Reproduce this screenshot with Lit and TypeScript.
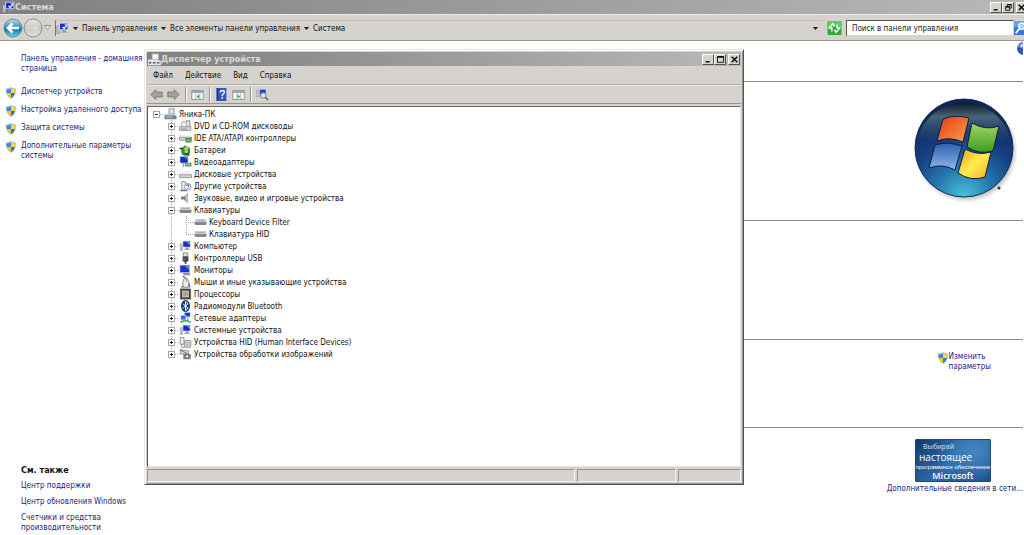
import { LitElement, html, svg, css, nothing } from "lit";
import { customElement, property } from "lit/decorators.js";

const monitor = svg`<rect x="4" y="1" width="11" height="9" fill="#d8dcec"/><rect x="5" y="2" width="9" height="7" fill="#1230c8"/><path d="M9 2h5v5z" fill="#6f8cf4"/><path d="M8 10h4v2h2v1H6v-1h2z" fill="#8c92a4"/>`;
const drive = svg`<path d="M2 5h11l3 4v4H0V9z" fill="#c9c9c9"/><path d="M2 5h11l3 4H0z" fill="#f1f1f1"/><path d="M0 9h16v4H0z" fill="#d2d2d2" stroke="#777" stroke-width=".8"/>`;
const pc = svg`<path d="M1 5h3v9H1z" fill="#c5c8d2" stroke="#848894" stroke-width=".7"/>${monitor}`;
const panel = svg`<rect x="1" y="3" width="14" height="11" fill="#fafafa" stroke="#7d8792"/><path d="M1 3h14v3H1z" fill="#8fa4b8"/><path d="M6 6v8M11 6v8" stroke="#9aa4ac"/>`;

const ICONS: Record<string, unknown> = {
  monitor,
  pc,
  drive,
  system: svg`${pc}<path d="M8 6l2 2 4-5" stroke="#fff" stroke-width="1.5" fill="none"/>`,
  root: svg`<path d="M6 1h7v7H6z" fill="#dfe5ea" stroke="#7b8792"/><path d="M1 8h12l3 3v4H0v-5z" fill="#71838f"/><path d="M1 8h12l2 2H1z" fill="#b9c8d0"/><path d="M2 12h8" stroke="#d9e4ea"/>`,
  devmgr: svg`<path d="M5 1h8v7H5z" fill="#f4f6f8" stroke="#a3adb5"/><path d="M0 8h12l4 2v5H0z" fill="#dfe6ea"/><path d="M1 12h3M6 12h3M11 12h3" stroke="#4d5962" stroke-width="2"/>`,
  dvd: svg`<path d="M9 1h5v10H9z" fill="#e4e4e4" stroke="#777"/><circle cx="6" cy="6" r="4" fill="#eee" stroke="#999"/><path d="M0 9h15v5H0z" fill="#d6d6d6" stroke="#888"/><path d="M2 12h8" stroke="#777"/>`,
  ide: svg`<path d="M2 4h11l3 3v4H0V7z" fill="#b0b0b0"/><path d="M2 4h11l3 3H0z" fill="#f1f1f1"/><path d="M0 7h16v4H0z" fill="#d2d2d2" stroke="#777" stroke-width=".8"/><path d="M8 8h8v6H8z" fill="#3d9852"/><path d="M9 11h6" stroke="#bfe6b8"/>`,
  battery: svg`<path d="M2 7l5-5 7 3v8l-6 3-5-2z" fill="#3c8b35"/><path d="M5 7l4-4 4 2-3 4z" fill="#9dd884"/><path d="M0 6h5M8 13l5 2" stroke="#333" stroke-width="2"/><circle cx="9" cy="10" r="2" fill="#c8e850"/>`,
  video: svg`<rect x="0" y="0" width="12" height="10" fill="#dde"/><rect x="1" y="1" width="10" height="8" fill="#1230c8"/><path d="M6 1h5v5z" fill="#5d7df0"/><path d="M7 9h9v5H7z" fill="#539b72"/><path d="M5 9v6" stroke="#667"/><path d="M9 11h5" stroke="#d9efdf"/>`,
  other: svg`<path d="M3 2h5v12H3z" fill="#e7e7e7" stroke="#888"/><path d="M1 14h9" stroke="#777" stroke-width="2"/><circle cx="11" cy="9" r="4.5" fill="#eef2fb" stroke="#7684a5"/><path d="M9.500 8q0-2 1.500-2t1.500 1.500q0 1-1.500 2M11 11v1" stroke="#2746a0" stroke-width="1.200" fill="none"/>`,
  sound: svg`<path d="M2 6h4l5-5v14l-5-5H2z" fill="#7b828a"/><path d="M7 5l4-4v14l-2-2z" fill="#bcc1c7"/>`,
  keyboard: svg`<path d="M3 4h10q2 0 3 4v2q0 2-2 2H2q-2 0-2-2V8q1-4 3-4z" fill="#85878c"/><path d="M3 4h10q2 0 3 4H0q1-4 3-4z" fill="#cfd0d4"/><path d="M3 6h10" stroke="#9b9da3"/>`,
  usb: svg`<path d="M5 1h6v5H5z" fill="#ddd" stroke="#777"/><path d="M4 6h8v5q0 2-4 3-4-1-4-3z" fill="#4a4a4c"/><path d="M8 13v3" stroke="#444" stroke-width="2"/><path d="M6 8v3" stroke="#999"/>`,
  display: svg`<rect x="0" y="1" width="14" height="11" fill="#ccd3ee"/><rect x="1" y="2" width="12" height="9" fill="#1636cc"/><path d="M7 2h6v6z" fill="#6f8cf4"/><path d="M5 12h9v3H5z" fill="#8c92a4"/>`,
  mouse: svg`<path d="M5 15q-2-9 2-12 6-1 6 12z" fill="#ececec" stroke="#666"/><path d="M8 3q-1-3-4-2M5 14L2 15M12 10l2 5" stroke="#444" stroke-width="1.300" fill="none"/><path d="M9 3v5" stroke="#777"/>`,
  cpu: svg`<rect x="1" y="1" width="14" height="14" fill="#3e3c38"/><rect x="4" y="4" width="8" height="8" fill="#a6a49c" stroke="#d6d4cc"/><path d="M1 1h14v14H1z" fill="none" stroke="#77736a" stroke-dasharray="1 1"/>`,
  bluetooth: svg`<ellipse cx="8" cy="8" rx="6" ry="8" fill="#0a3c74"/><path d="M4.500 5l7 6L8 14V2l3.500 3-7 6" stroke="#fff" stroke-width="1.300" fill="none"/>`,
  network: svg`<rect x="6" y="0" width="9" height="7" fill="#cdd6f4"/><rect x="7" y="1" width="7" height="5" fill="#1d3fd0"/><rect x="1" y="4" width="8" height="7" fill="#cdd6f4"/><rect x="2" y="5" width="6" height="5" fill="#3f67e4"/><path d="M1 14q7-5 14 0" stroke="#4db653" stroke-width="2.500" fill="none"/><path d="M11 7v5" stroke="#57a"/>`,
  hid: svg`<path d="M1 2h5v9H1z" fill="#eee" stroke="#777"/><path d="M3 11v4h4" stroke="#777" fill="none"/><rect x="7" y="6" width="8" height="9" rx="1" fill="#dde1e4" stroke="#6a7277"/><path d="M9 9h4M9 12h4" stroke="#777"/>`,
  imaging: svg`<path d="M1 2l11 2v4H1z" fill="#ddd" stroke="#777"/><rect x="5" y="8" width="10" height="7" fill="#7f8589"/><circle cx="10" cy="11" r="2.500" fill="#dfe6ea" stroke="#444"/><path d="M1 3l9 4" stroke="#555"/>`,
  shield: svg`<path d="M8 0q3 2 7 2 0 10-7 14Q1 12 1 2q4 0 7-2z" fill="#aebccb"/><path d="M8 2v6H2.500Q2 6 2 3.500 5 3.500 8 2z" fill="#3f87d2"/><path d="M8 2q3 1.500 6 1.500Q14 6 13.500 8H8z" fill="#f6d743"/><path d="M2.500 8H8v6.500Q3.500 12 2.500 8z" fill="#f0c630"/><path d="M8 8h5.500Q12.500 12 8 14.500z" fill="#2f78c6"/>`,
  arrowL: svg`<path d="M1 8l6-6v3h8v6H7v3z" fill="#a3a19c" stroke="#75736e"/>`,
  arrowR: svg`<path d="M15 8L9 2v3H1v6h8v3z" fill="#a3a19c" stroke="#75736e"/>`,
  treeView: svg`${panel}<path d="M10 8v5L7 10.500z" fill="#2c9a3a"/>`,
  actions: svg`${panel}<path d="M7 8v5l3-2.500z" fill="#2c9a3a"/>`,
  help: svg`<rect x="2" y="0" width="12" height="16" fill="#3058c0"/><path d="M2 0h2v16H2z" fill="#1a3792"/><path d="M6.500 5.500Q6.500 3 9 3t2.500 2q0 2-2.500 3.500V10M9 11.500v2" stroke="#fff" stroke-width="1.700" fill="none"/>`,
  scan: svg`<rect x="4" y="1" width="9" height="8" fill="#d0d8f4"/><rect x="5" y="2" width="7" height="6" fill="#2140c8"/><path d="M1 3h3v8H1z" fill="#c8ccd6" stroke="#8b8f98" stroke-width=".7"/><circle cx="9" cy="9" r="3.500" fill="#d9ebf7" fill-opacity=".85" stroke="#667"/><path d="M11.500 11.500L15 15" stroke="#6b6b70" stroke-width="2"/>`,
  refresh: svg`<rect width="16" height="16" rx="1" fill="#35a83b"/><path d="M0 0h16v7H0z" fill="#64c863"/><path d="M5 12V8H2l4-5 2 3M11 4v4h3l-4 5-2-3" fill="none" stroke="#fff" stroke-width="1.600"/>`,
  search: svg`<rect width="16" height="16" fill="#3b74d8"/><path d="M0 0h16v7H0z" fill="#6ba0ec"/><circle cx="9" cy="6" r="3.500" fill="#a8d0fa" stroke="#fff" stroke-width="1.500"/><path d="M6 9l-4 5" stroke="#fff" stroke-width="2.200"/>`,
  info: svg`<circle cx="8" cy="8" r="8" fill="#2b55b4"/><path d="M1 6a7 7 0 0 1 14 0q-7 3-14 0z" fill="#6c94de"/><path d="M5.500 6Q5.500 3.500 8 3.500T10.500 6q0 1-2.500 2.500V10M8 11.500v2" stroke="#fff" stroke-width="1.700" fill="none"/>`,
  min: svg`<path d="M3 12h7" stroke="#000" stroke-width="2.500"/>`,
  max: svg`<path d="M2.500 3h11v10h-11z" fill="none" stroke="#000" stroke-width="1.500"/><path d="M2 3.500h12" stroke="#000" stroke-width="2.500"/>`,
  restore: svg`<path d="M6 6V3h7v6h-3M3 6.500h7V13H3z" fill="none" stroke="#000" stroke-width="1.500"/><path d="M3 7h7M6 3h7" stroke="#000" stroke-width="2"/>`,
  close: svg`<path d="M3 3l10 10M13 3L3 13" stroke="#000" stroke-width="2.400"/>`,
};

const icon = (name: string, cls = "icon") =>
  html`<svg class=${cls} viewBox="0 0 16 16" aria-hidden="true">${ICONS[name]}</svg>`;

const shared = css`
  * { box-sizing: border-box; }
  button, input { font: inherit; color: inherit; margin: 0; padding: 0; border: 0; background: none; }
  button { display: flex; align-items: center; justify-content: center; flex: none; }
  ul { list-style: none; margin: 0; padding: 0; }
  h1, h2 { margin: 0; font-size: 9px; line-height: 10px; }
  .icon { width: 13px; height: 13px; flex: none; display: block; }
  .title {
    display: flex; align-items: center; height: 14px; padding-left: 2px;
    background: linear-gradient(90deg, #808080, #b8b8b8);
    color: #dcd9d4; font-weight: bold;
  }
  .title h1, .title h2 { flex: 1; }
  .caption {
    width: 12px; height: 11px; background: #d6d3ce;
    border: 1px solid; border-color: #fff #55534f #55534f #fff;
  }
  .caption .icon { width: 9px; height: 9px; }
  .gap { margin-left: 2px; }
`;

interface Node { label: string; icon: string; children?: Node[]; open?: boolean; leaf?: boolean; }

const DEVICES: Node[] = [
  { label: "DVD и CD-ROM дисководы", icon: "dvd" },
  { label: "IDE ATA/ATAPI контроллеры", icon: "ide" },
  { label: "Батареи", icon: "battery" },
  { label: "Видеоадаптеры", icon: "video" },
  { label: "Дисковые устройства", icon: "drive" },
  { label: "Другие устройства", icon: "other" },
  { label: "Звуковые, видео и игровые устройства", icon: "sound" },
  {
    label: "Клавиатуры", icon: "keyboard", open: true,
    children: [
      { label: "Keyboard Device Filter", icon: "keyboard", leaf: true },
      { label: "Клавиатура HID", icon: "keyboard", leaf: true },
    ],
  },
  { label: "Компьютер", icon: "pc" },
  { label: "Контроллеры USB", icon: "usb" },
  { label: "Мониторы", icon: "display" },
  { label: "Мыши и иные указывающие устройства", icon: "mouse" },
  { label: "Процессоры", icon: "cpu" },
  { label: "Радиомодули Bluetooth", icon: "bluetooth" },
  { label: "Сетевые адаптеры", icon: "network" },
  { label: "Системные устройства", icon: "pc" },
  { label: "Устройства HID (Human Interface Devices)", icon: "hid" },
  { label: "Устройства обработки изображений", icon: "imaging" },
];

@customElement("device-tree")
class DeviceTree extends LitElement {
  @property({ attribute: false }) nodes: Node[] = [];

  static styles = [shared, css`
    :host { display: block; }
    .row { display: flex; align-items: center; height: 12px; white-space: nowrap; }
    .twig {
      display: flex; align-items: center; justify-content: center; width: 16px; height: 12px; flex: none;
      background: repeating-linear-gradient(90deg, #aaa 0 1px, transparent 1px 2px) 8px 6px / 8px 1px no-repeat;
    }
    .icon { margin-right: 2px; width: 13px; height: 12px; }
    .label { padding-top: 1px; }
    .branch {
      padding-left: 15px;
      background: repeating-linear-gradient(#aaa 0 1px, transparent 1px 2px) 23px 0 / 1px calc(100% - 6px) no-repeat;
    }
    .box { position: relative; width: 7px; height: 7px; border: 1px solid #a8a8a8; background: #fff; }
    .box::before { content: ""; position: absolute; inset: 2px 1px; background: #222; }
    .closed::after { content: ""; position: absolute; inset: 1px 2px; background: #222; }
  `];

  private node(n: Node): unknown {
    return html`<li role="treeitem" aria-expanded=${n.leaf ? nothing : n.open ? "true" : "false"}>
      <div class="row">
        <span class="twig">${n.leaf ? nothing : html`<button class="box ${n.open ? "" : "closed"}" aria-label=${n.label}></button>`}</span>
        ${icon(n.icon)}<span class="label">${n.label}</span>
      </div>
      ${n.children ? html`<ul class="branch" role="group">${n.children.map((c) => this.node(c))}</ul>` : nothing}
    </li>`;
  }

  render() {
    return html`<ul role="tree">${this.nodes.map((n) => this.node(n))}</ul>`;
  }
}

@customElement("device-manager")
class DeviceManager extends LitElement {
  static styles = [shared, css`
    :host {
      display: flex; flex-direction: column; padding: 2px;
      background: #d6d3ce; border: 1px solid; border-color: #e8e5e0 #55534f #55534f #e8e5e0;
      box-shadow: inset 1px 1px #fff, inset -1px -1px #96948f;
    }
    .title { padding: 0 1px; }
    .menu { display: flex; align-items: center; gap: 12px; height: 19px; padding: 2px 0 0 6px; border-bottom: 1px solid #b0ada8; }
    .tools { display: flex; align-items: center; gap: 4px; height: 19px; padding-left: 3px; border-top: 1px solid #eeebe6; border-bottom: 1px solid #96948f; }
    .sep { width: 2px; height: 15px; margin-left: 1px; border-left: 1px solid #96948f; border-right: 1px solid #fff; }
    .view {
      flex: 1; margin-top: 2px; padding-top: 1px; background: #fff;
      border: 1px solid; border-color: #6b6964 #e8e5e0 #e8e5e0 #55534f;
    }
    .status { display: grid; grid-template-columns: 428fr 99fr 63fr; gap: 2px; padding-top: 2px; }
    .cell { height: 13px; border: 1px solid; border-color: #96948f #f4f2ee #f4f2ee #96948f; }
  `];

  render() {
    const sep = html`<span class="sep"></span>`;
    const tool = (n: string, label: string) => html`<button aria-label=${label}>${icon(n)}</button>`;
    return html`
      <header class="title">
        ${icon("devmgr")}<h2>Диспетчер устройств</h2>
        <button class="caption" aria-label="Свернуть">${icon("min")}</button>
        <button class="caption" aria-label="Развернуть">${icon("max")}</button>
        <button class="caption gap" aria-label="Закрыть">${icon("close")}</button>
      </header>
      <nav class="menu">
        ${["Файл", "Действие", "Вид", "Справка"].map((m) => html`<button>${m}</button>`)}
      </nav>
      <div class="tools">
        ${tool("arrowL", "Назад")}${tool("arrowR", "Вперед")}${sep}${tool("treeView", "Дерево консоли")}${sep}
        ${tool("help", "Справка")}${tool("actions", "Панель действий")}${sep}${tool("scan", "Обновить конфигурацию")}
      </div>
      <div class="view">
        <device-tree .nodes=${[{ label: "Яника-ПК", icon: "root", open: true, children: DEVICES }]}></device-tree>
      </div>
      <footer class="status"><span class="cell"></span><span class="cell"></span><span class="cell"></span></footer>
    `;
  }
}

@customElement("app-root")
class AppRoot extends LitElement {
  static styles = [shared, css`
    :host {
      display: flex; flex-direction: column; position: relative; min-height: 100vh; overflow: hidden;
      background: #fff; color: #111; font: 8px/10px "DejaVu Sans Condensed", "DejaVu Sans", sans-serif;
    }
    a { color: #1c1c80; text-decoration: none; }
    .bar { display: flex; align-items: center; height: 27px; padding-left: 3px; background: #d6d3ce; border-top: 1px solid #efece7; border-bottom: 1px solid #96948f; }
    .round { width: 20px; height: 20px; }
    .drop { width: 8px; margin-right: 4px; }
    .address {
      display: flex; align-items: center; gap: 4px; flex: 1; height: 16px; padding-right: 5px;
      border-left: 1px solid #77756f; border-top: 1px solid #c2bfba;
    }
    .address a { color: #111; padding-top: 1px; }
    .tri { width: 5px; height: 3px; flex: none; }
    .spacer { flex: 1; }
    .go { margin: 0 4px; }
    .go .icon { width: 15px; height: 14px; }
    .search { width: 168px; height: 16px; padding: 1px 5px 0; background: #fff; border: 1px solid; border-color: #55534f #d6d3ce #d6d3ce #55534f; }
    .search::placeholder { color: #222; opacity: 1; }
    .find { width: 10px; overflow: hidden; justify-content: flex-start; }
    .find .icon { width: 14px; height: 14px; }
    .edge { width: 8px; overflow: hidden; justify-content: flex-start; border-right: 0; }
    .body { display: flex; flex: 1; }
    .side { display: flex; flex-direction: column; width: 144px; padding: 13px 0 2px 5px; }
    .home { margin-bottom: 13px; padding-left: 16px; white-space: nowrap; }
    .tasks { display: grid; gap: 6px; }
    .task { display: flex; gap: 4px; white-space: nowrap; }
    .task .icon { width: 12px; height: 12px; }
    .also { display: flex; flex-direction: column; gap: 6px; margin-top: auto; padding-left: 16px; }
    .main { flex: 1; padding-right: 1px; }
    .section { display: flex; justify-content: flex-end; border-bottom: 1px solid #8c8c8c; }
    .head { height: 41px; }
    .brand { height: 139px; padding: 13px 5px 0 0; }
    .facts { height: 119px; }
    .name { height: 88px; padding: 12px 32px 0 0; }
    .change { display: flex; align-items: flex-start; }
    .change .icon { width: 12px; height: 12px; }
    .corner { width: 6px; height: 15px; overflow: hidden; justify-content: flex-start; }
    .logo { width: 106px; height: 108px; }
    .genuine { display: flex; flex-direction: column; align-items: flex-end; padding-top: 11px; }
    .badge {
      display: flex; flex-direction: column; align-items: center; width: 76px; height: 43px; margin: 0 32px 2px 0; padding: 2px 0;
      border: 1px solid #24456e; border-radius: 1px; color: #fff; white-space: nowrap;
      background: radial-gradient(circle at 80% 30%, #4585c0, transparent 60%), linear-gradient(135deg, #123a70, #2a6aac 50%, #123f80);
      font-family: "Open Sans", "Noto Sans", sans-serif;
    }
    .choose { align-self: flex-start; padding-left: 7px; font-size: 7px; line-height: 9px; color: #d5e4f3; }
    .real { align-self: flex-start; padding-left: 3px; font-size: 10px; line-height: 12px; }
    .soft { font-size: 6px; line-height: 8px; font-family: "Liberation Sans", sans-serif; }
    .ms { font-size: 9px; line-height: 9px; font-weight: 600; }
    .window { position: absolute; left: 144px; right: 280px; top: 49px; height: 436px; }
  `];

  render() {
    const tri = html`<svg class="tri" viewBox="0 0 5 3" aria-hidden="true"><path d="M0 0h5L2.500 3z" fill="#111"/></svg>`;
    const task = (t: unknown) => html`<li class="task">${icon("shield")}<a href="#">${t}</a></li>`;
    return html`
      <header class="title">
        ${icon("system")}<h1>Система</h1>
        <button class="caption" aria-label="Свернуть">${icon("min")}</button>
        <button class="caption" aria-label="Восстановить">${icon("restore")}</button>
        <button class="caption edge gap" aria-label="Закрыть">${icon("close")}</button>
      </header>
      <nav class="bar">
        <button aria-label="Назад"><svg class="round" viewBox="0 0 20 20">
          <defs><linearGradient id="bk" x2="0" y2="1"><stop offset="0" stop-color="#b9dcea"/><stop offset=".5" stop-color="#2a8fc4"/><stop offset=".55" stop-color="#0e6ca8"/><stop offset="1" stop-color="#5fe0ee"/></linearGradient></defs>
          <circle cx="10" cy="10" r="9" fill="url(#bk)" stroke="#6d8794"/><path d="M16 10H5M9.500 5.500L5 10l4.500 4.500" fill="none" stroke="#fff" stroke-width="2.600"/></svg></button>
        <button aria-label="Вперед"><svg class="round" viewBox="0 0 20 20">
          <defs><linearGradient id="fw" x2="0" y2="1"><stop offset="0" stop-color="#e9e9e9"/><stop offset=".5" stop-color="#c6c6c6"/><stop offset="1" stop-color="#e2e2e2"/></linearGradient></defs>
          <circle cx="10" cy="10" r="9" fill="url(#fw)" stroke="#8f8f8f"/><path d="M4 10h10M10.500 6l4 4-4 4" fill="none" stroke="#d6d6d6" stroke-width="2"/></svg></button>
        <button class="drop" aria-label="Последние страницы"><svg width="7" height="5" viewBox="0 0 7 5"><path d="M.5.5h6l-3 4z" fill="#f4f4f4" stroke="#8e8e8e"/></svg></button>
        <div class="address">
          ${icon("system")}${tri}<a href="#">Панель управления</a>${tri}<a href="#">Все элементы панели управления</a>${tri}<a href="#">Система</a>
          <span class="spacer"></span>${tri}
        </div>
        <button class="go" aria-label="Обновить">${icon("refresh")}</button>
        <input class="search" type="text" aria-label="Поиск" placeholder="Поиск в панели управления" />
        <button class="find" aria-label="Найти">${icon("search")}</button>
      </nav>
      <div class="body">
        <aside class="side">
          <div class="home"><a href="#">Панель управления - домашняя<br />страница</a></div>
          <ul class="tasks">
            ${task("Диспетчер устройств")}${task("Настройка удаленного доступа")}${task("Защита системы")}
            ${task(html`Дополнительные параметры<br />системы`)}
          </ul>
          <div class="also">
            <h2>См. также</h2>
            <a href="#">Центр поддержки</a><a href="#">Центр обновления Windows</a>
            <a href="#">Счетчики и средства<br />производительности</a>
          </div>
        </aside>
        <main class="main">
          <section class="section head"><button class="corner" aria-label="Справка">${icon("info")}</button></section>
          <section class="section brand">
            <svg class="logo" viewBox="0 0 106 108" role="img" aria-label="Windows">
              <defs>
                <radialGradient id="orb" cx=".5" cy="1" r="1"><stop offset="0" stop-color="#4cc4d8"/><stop offset=".3" stop-color="#2478ae"/><stop offset=".6" stop-color="#153c80"/><stop offset="1" stop-color="#0d2450"/></radialGradient>
                <linearGradient id="gloss" x2="0" y2="1"><stop offset="0" stop-color="#0c1a2a"/><stop offset=".35" stop-color="#4a6478"/><stop offset="1" stop-color="#1c3f70" stop-opacity=".1"/></linearGradient>
                <linearGradient id="r" x2="1" y2="1"><stop offset="0" stop-color="#e23c10"/><stop offset="1" stop-color="#f8a050"/></linearGradient>
                <linearGradient id="g" x2="0" y2="1"><stop offset="0" stop-color="#a4d860"/><stop offset="1" stop-color="#3c9c20"/></linearGradient>
                <linearGradient id="b" x2="0" y2="1"><stop offset="0" stop-color="#2c62b0"/><stop offset="1" stop-color="#90b8e8"/></linearGradient>
                <linearGradient id="y" x2="1" y2="1"><stop offset="0" stop-color="#f0a010"/><stop offset=".5" stop-color="#ffec50"/><stop offset="1" stop-color="#f4b020"/></linearGradient>
                <radialGradient id="sh"><stop offset=".88" stop-color="#777" stop-opacity=".5"/><stop offset="1" stop-color="#999" stop-opacity="0"/></radialGradient>
              </defs>
              <circle cx="54" cy="56" r="52" fill="url(#sh)"/>
              <circle cx="52" cy="53" r="49" fill="url(#orb)" stroke="#142c58" stroke-width="1"/>
              <path d="M6 42A48 48 0 0 1 98 42Q75 50 52 48T6 42z" fill="url(#gloss)"/>
              <g stroke="#101c3c" stroke-width="1">
                <path d="M31 24q11-5 26-1l-6 24q-14-6-26-1z" fill="url(#r)"/>
                <path d="M60 28q14 8 27 3l-6 25q-14 4-26-4z" fill="url(#g)"/>
                <path d="M23 50q13-4 27 1l-7 24q-13-7-26-2z" fill="url(#b)"/>
                <path d="M53 54q13 7 26 3l-6 25q-14 5-27-4z" fill="url(#y)"/>
              </g>
              <circle cx="87" cy="93" r="1.500" fill="#333"/>
            </svg>
          </section>
          <section class="section facts"></section>
          <section class="section name"><a class="change" href="#">${icon("shield")}<span>Изменить<br />параметры</span></a></section>
          <section class="genuine">
            <div class="badge">
              <span class="choose">Выбирай</span><span class="real">настоящее</span>
              <span class="soft">программное обеспечение</span><span class="ms">Microsoft</span>
            </div>
            <a href="#">Дополнительные сведения в сети...</a>
          </section>
        </main>
      </div>
      <device-manager class="window"></device-manager>
    `;
  }
}
